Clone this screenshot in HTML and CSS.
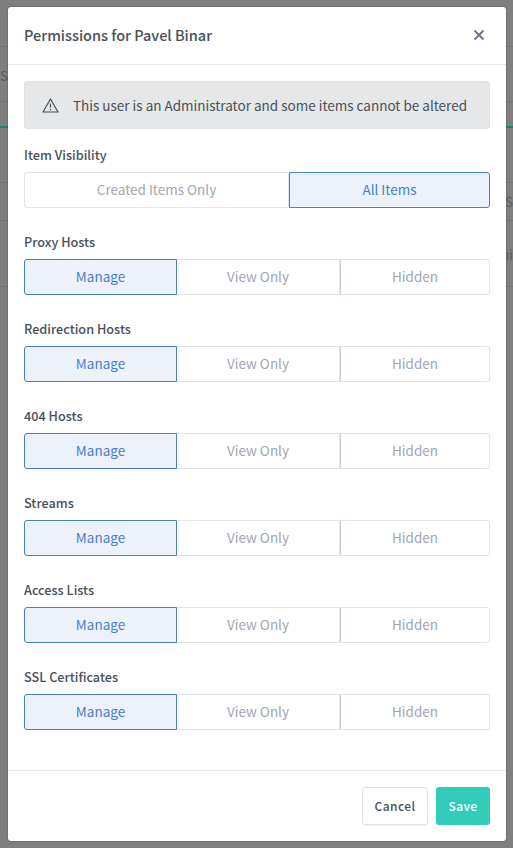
FILE: index.html
```html
<!DOCTYPE html>
<html lang="en">
<head>
    <meta charset="UTF-8">
    <meta name="viewport" content="width=device-width, initial-scale=1.0">
    <title>Permissions for Pavel Binar</title>
    <link rel="stylesheet" href="styles.css">
</head>
<body>
    <!-- page behind the modal, only the edges show -->
    <div class="backdrop">
        <div class="bg-line bg-line-1"></div>
        <div class="bg-line bg-line-2"></div>
        <div class="bg-line bg-line-accent"></div>
        <div class="bg-line bg-line-3"></div>
        <div class="bg-line bg-line-4"></div>
        <div class="bg-line bg-line-5"></div>
        <span class="bg-text bg-text-1">SI</span>
        <span class="bg-text bg-text-2">ES</span>
        <span class="bg-text bg-text-3">ni</span>
    </div>
    <div class="modal">
        <div class="modal-header">
            <h4 class="modal-title">Permissions for Pavel Binar</h4>
            <svg class="modal-close" width="12" height="12" viewBox="0 0 12 12" fill="none" stroke="#6e7687" stroke-width="2" xmlns="http://www.w3.org/2000/svg">
                <path d="M1.5 1.5L10.5 10.5M10.5 1.5L1.5 10.5"/>
            </svg>
        </div>
        <div class="modal-body">
            <div class="alert">
                <svg class="alert-icon" width="17" height="15" viewBox="0 0 17 15" fill="none" stroke="#495057" stroke-width="1.2" stroke-linejoin="round" xmlns="http://www.w3.org/2000/svg">
                    <path d="M8.5 1L16 14H1Z"/>
                    <path d="M8.5 5.5V9.8M8.5 11V12.2"/>
                </svg>
                <span>This user is an Administrator and some items cannot be altered</span>
            </div>

            <div class="form-group">
                <label class="form-label">Item Visibility</label>
                <div class="selectgroup two">
                    <div class="select-item">Created Items Only</div>
                    <div class="select-item active">All Items</div>
                </div>
            </div>
            <div class="form-group">
                <label class="form-label">Proxy Hosts</label>
                <div class="selectgroup">
                    <div class="select-item active">Manage</div>
                    <div class="select-item">View Only</div>
                    <div class="select-item">Hidden</div>
                </div>
            </div>
            <div class="form-group">
                <label class="form-label">Redirection Hosts</label>
                <div class="selectgroup">
                    <div class="select-item active">Manage</div>
                    <div class="select-item">View Only</div>
                    <div class="select-item">Hidden</div>
                </div>
            </div>
            <div class="form-group">
                <label class="form-label">404 Hosts</label>
                <div class="selectgroup">
                    <div class="select-item active">Manage</div>
                    <div class="select-item">View Only</div>
                    <div class="select-item">Hidden</div>
                </div>
            </div>
            <div class="form-group">
                <label class="form-label">Streams</label>
                <div class="selectgroup">
                    <div class="select-item active">Manage</div>
                    <div class="select-item">View Only</div>
                    <div class="select-item">Hidden</div>
                </div>
            </div>
            <div class="form-group">
                <label class="form-label">Access Lists</label>
                <div class="selectgroup">
                    <div class="select-item active">Manage</div>
                    <div class="select-item">View Only</div>
                    <div class="select-item">Hidden</div>
                </div>
            </div>
            <div class="form-group">
                <label class="form-label">SSL Certificates</label>
                <div class="selectgroup">
                    <div class="select-item active">Manage</div>
                    <div class="select-item">View Only</div>
                    <div class="select-item">Hidden</div>
                </div>
            </div>
        </div>
        <div class="modal-footer">
            <button type="button" class="btn btn-cancel">Cancel</button>
            <button type="button" class="btn btn-save">Save</button>
        </div>
    </div>
</body>
</html>
```

FILE: styles.css
```css
html, body {
    margin: 0;
    height: 848px;
    overflow: hidden;
}
body {
    position: relative;
    background: #7f7f80;
    font-family: "Noto Sans CJK KR", "Noto Sans", sans-serif;
    color: #495057;
}
* {
    box-sizing: border-box;
}

/* page behind the modal */
.backdrop {
    position: absolute;
    inset: 0;
}
.bg-line {
    position: absolute;
    left: 0;
    right: 0;
    height: 1px;
    background: #727374;
}
.bg-line-1 { top: 46px; }
.bg-line-2 { top: 101px; }
.bg-line-accent { top: 126px; height: 2px; background: #1a8478; }
.bg-line-3 { top: 182px; }
.bg-line-4 { top: 220px; }
.bg-line-5 { top: 286px; }
.bg-text {
    position: absolute;
    font-size: 13.5px;
    line-height: 18px;
    color: #5c5d5e;
}
.bg-text-1 { left: 0; top: 66px; }
.bg-text-2 { right: 0; top: 192px; }
.bg-text-3 { right: 0; top: 245px; }

/* modal */
.modal {
    position: absolute;
    top: 7px;
    left: 8px;
    width: 498px;
    height: 834px;
    background: #fff;
    border-radius: 3px;
    display: flex;
    flex-direction: column;
    box-shadow: 0 0 2px rgba(0, 0, 0, 0.4);
}
.modal-header {
    height: 58px;
    padding: 0 16px 1px;
    border-bottom: 1px solid #e4e8ee;
    display: flex;
    align-items: center;
    justify-content: space-between;
}
.modal-title {
    margin: 0 0 1px;
    font-size: 14.5px;
    font-weight: 500;
    color: #495057;
}
.modal-close {
    margin-right: 5px;
}
.modal-body {
    flex: 1;
    padding: 16px 16px 0;
}
.alert {
    height: 48px;
    padding: 0 17px;
    background: #e6e7e9;
    border: 1px solid #dfe1e4;
    border-radius: 3px;
    display: flex;
    align-items: center;
    gap: 14px;
    font-size: 13.5px;
}
.alert-icon {
    flex: none;
}
.form-group {
    margin-top: 24px;
}
.alert + .form-group {
    margin-top: 16px;
}
.form-label {
    display: block;
    height: 20px;
    line-height: 20px;
    margin-bottom: 7px;
    font-size: 12.7px;
    font-weight: 500;
}
.selectgroup {
    display: grid;
    grid-template-columns: 153px 163px 1fr;
    height: 36px;
}
.selectgroup.two {
    grid-template-columns: 265px 1fr;
}
.select-item {
    display: flex;
    align-items: center;
    justify-content: center;
    padding-bottom: 2px;
    font-size: 13.5px;
    color: #a0a6b1;
    background: #fff;
    border: 1px solid #e0e5ec;
    border-left: 0;
}
.select-item:first-child {
    border-left: 1px solid #e0e5ec;
    border-radius: 3px 0 0 3px;
}
.select-item:last-child {
    border-left: 1px solid #c5d0de;
    border-radius: 0 3px 3px 0;
}
.select-item.active {
    color: #467fcf;
    background: #edf2fa;
    border: 1px solid #467fcf;
}

.modal-footer {
    height: 71px;
    padding: 0 16px 0 0;
    border-top: 1px solid #e4e8ee;
    display: flex;
    align-items: center;
    justify-content: flex-end;
    gap: 8px;
}
.btn {
    height: 38px;
    padding: 0 0 2px;
    border-radius: 3px;
    font-family: inherit;
    font-size: 12px;
    font-weight: 500;
    letter-spacing: 0.4px;
}
.btn-cancel {
    width: 66px;
    background: #fff;
    color: #495057;
    border: 1px solid #dfe3ea;
    box-shadow: 0 1px 1px rgba(0, 0, 0, 0.05);
}
.btn-save {
    width: 54px;
    background: #33ccb9;
    color: #fff;
    border: 0;
}
```
